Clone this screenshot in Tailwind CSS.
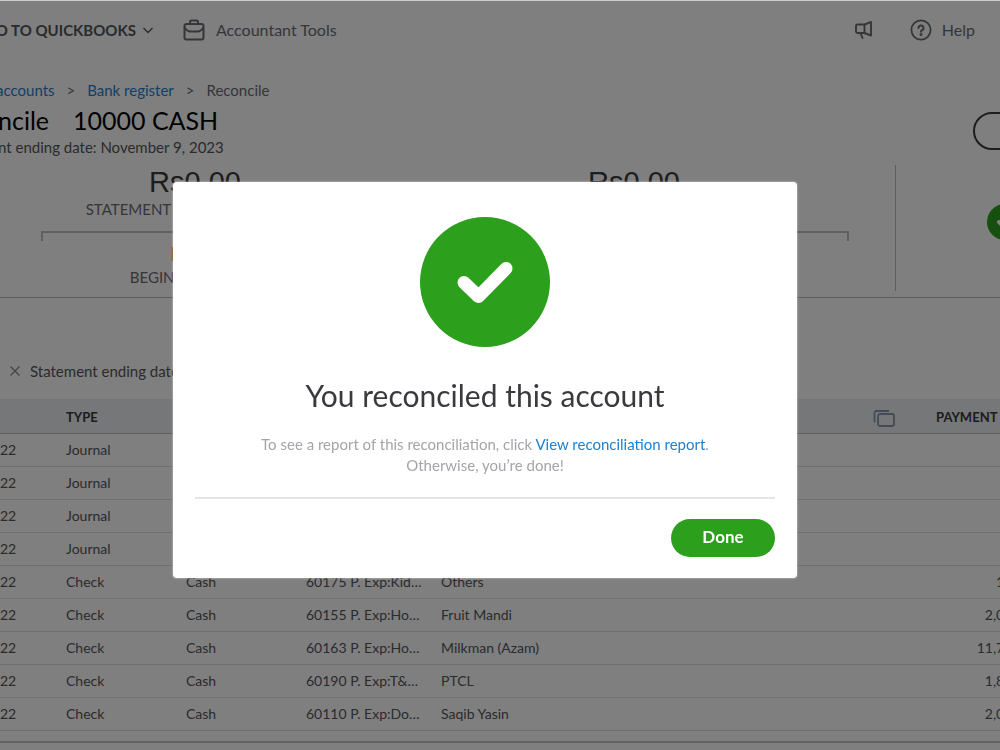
<!DOCTYPE html>
<html lang="en">
<head>
    <meta charset="UTF-8">
    <meta name="viewport" content="width=device-width, initial-scale=1.0">
    <title>Reconcile</title>
    <script src="https://cdn.jsdelivr.net/npm/@tailwindcss/browser@4"></script>
</head>
<body class="h-screen overflow-hidden bg-white font-['Lato',sans-serif] text-[#54565a]">

    <!-- Top bar -->
    <header class="flex h-[60px] items-center overflow-hidden whitespace-nowrap border-t border-[#ccc]">
        <button type="button" class="-ml-1 flex w-[158px] shrink-0 items-center justify-end gap-1.5 text-[15px] font-bold">
            O TO QUICKBOOKS
            <svg class="h-3 w-3 shrink-0" viewBox="0 0 12 12" fill="none" stroke="currentColor" stroke-width="1.3"><path d="M1.500 3 6 7.500 10.500 3"/></svg>
        </button>
        <button type="button" class="ml-7 flex items-center gap-2.5 pb-0.5 text-base text-[#6b6c72]">
            <svg class="h-6 w-6" viewBox="0 0 24 24" fill="none" stroke="currentColor" stroke-width="2" stroke-linejoin="round"><rect x="2.500" y="6" width="19" height="15.500" rx="2"/><path d="M8 6V4a1.500 1.500 0 0 1 1.500-1.500h5A1.500 1.500 0 0 1 16 4v2M2.500 9.500C4 12 6 13.500 8.500 13.500h7c2.500 0 4.500-1.500 6-4"/></svg>
            Accountant Tools
        </button>
        <div class="ml-auto flex items-center gap-9 pb-0.5 pr-[25px] text-base text-[#6b6c72]">
            <button type="button" aria-label="Feedback">
                <svg class="h-5 w-5" viewBox="0 0 20 20" fill="none" stroke="currentColor" stroke-width="1.9" stroke-linejoin="round" stroke-linecap="round"><path d="M10.500 4.500H3.500A1.500 1.500 0 0 0 2 6v5.500A1.500 1.500 0 0 0 3.500 13h7zM10.500 4.500 17 2v13.500L10.500 13M6.500 13 8.500 18"/></svg>
            </button>
            <button type="button" class="flex items-center gap-2.5">
                <svg class="h-[22px] w-[22px]" viewBox="0 0 22 22" fill="none" stroke="currentColor" stroke-width="1.8" stroke-linecap="round"><circle cx="11" cy="11" r="9.600"/><path d="M8.500 9a2.500 2.500 0 1 1 3.600 2.200c-.8.400-1.100.800-1.100 1.500" stroke-width="2"/><circle cx="11" cy="15.500" r=".6"/></svg>
                Help
            </button>
        </div>
    </header>

    <main>
        <!-- Breadcrumbs and title -->
        <div class="flex items-start justify-between">
            <div class="pt-5">
                <nav class="flex h-[21px] items-center gap-3 text-[15px] text-[#6b6c72]">
                    <a href="#" class="-ml-1 text-[#1f80cf]">accounts</a>
                    <span>&gt;</span>
                    <a href="#" class="text-[#1f80cf]">Bank register</a>
                    <span>&gt;</span>
                    <span>Reconcile</span>
                </nav>
                <h1 class="-ml-0.5 flex h-10 items-center gap-6 whitespace-nowrap text-[25px] text-black">
                    <span>ncile</span>
                    <span>10000 CASH</span>
                </h1>
                <p class="-ml-0.5 h-3 whitespace-nowrap text-[15px] leading-3">nt ending date: November 9, 2023</p>
            </div>
            <button type="button" aria-label="Edit info" class="-mr-24 mt-[52px] h-[38px] w-[123px] rounded-full border-2 border-[#393a3d]"></button>
        </div>

        <!-- Balance summary -->
        <section class="flex border-b border-[#bababa] pb-1.5 pt-3">
            <div class="h-[126px] w-[896px] shrink-0 border-r border-[#bababa]">
                <div class="grid grid-cols-[390px_488px] text-center">
                    <div>
                        <p class="font-['Liberation_Sans',sans-serif] text-[29px] leading-[34px] text-[#393a3d]">Rs0.00</p>
                        <p class="text-[15px] leading-5 text-[#6b6c72]">STATEMENT ENDING BALANCE</p>
                    </div>
                    <div>
                        <p class="font-['Liberation_Sans',sans-serif] text-[29px] leading-[34px] text-[#393a3d]">Rs0.00</p>
                        <p class="text-[15px] leading-5 text-[#6b6c72]">CLEARED BALANCE</p>
                    </div>
                </div>
                <div class="ml-[41px] mr-[46px] mt-3 h-2.5 border-x-2 border-t-2 border-[#babec5]"></div>
                <div class="w-[414px] text-center">
                    <p class="pr-2.5 font-['Liberation_Sans',sans-serif] text-xl leading-[26px] text-[#ff8000]">Rs0.00</p>
                    <p class="text-[15px] leading-5 text-[#6b6c72]">BEGINNING BALANCE</p>
                </div>
            </div>
            <div class="ml-[91px] flex items-center overflow-hidden">
                <svg class="-mt-3 h-9 w-9 shrink-0" viewBox="0 0 36 36"><circle cx="18" cy="18" r="18" fill="#2ca01c"/><path d="m12 18 4.500 4.500 8.500-8.500" fill="none" stroke="#fff" stroke-width="4" stroke-linecap="round" stroke-linejoin="round"/></svg>
            </div>
        </section>

        <!-- Active filter -->
        <div class="flex items-center gap-2.5 whitespace-nowrap pb-4 pl-2.5 pt-[61px] text-[15px] leading-6">
            <button type="button" aria-label="Clear filter">
                <svg class="h-2.5 w-2.5" viewBox="0 0 10 10" stroke="#8d9096" stroke-width="1.4"><path d="m.500.500 9 9m0-9-9 9"/></svg>
            </button>
            Statement ending date
        </div>

        <!-- Transactions -->
        <div class="overflow-hidden border-b-2 border-[#c4c6ca] pb-2.5">
            <table class="w-[105%] table-fixed whitespace-nowrap text-sm">
                <colgroup>
                    <col class="w-14">
                    <col class="w-[120px]">
                    <col class="w-[120px]">
                    <col class="w-[135px]">
                    <col>
                    <col class="w-[63px]">
                    <col class="w-[124px]">
                </colgroup>
                <thead class="bg-[#eceef1] text-[13px] text-[#393a3d]">
                    <tr class="h-[34px] border-b border-[#babec5] text-left">
                        <th></th>
                        <th class="px-2.5 pt-1">TYPE</th>
                        <th></th>
                        <th></th>
                        <th></th>
                        <th class="px-2.5 pt-1">
                            <svg class="h-[22px] w-[22px]" viewBox="0 0 22 22" fill="none" stroke="#8799ad" stroke-width="1.800"><rect x="5" y="7" width="16" height="12" rx="2"/><path d="M1.500 15.500V6a2 2 0 0 1 2-2H16"/></svg>
                        </th>
                        <th class="px-2.5 pt-1">PAYMENT</th>
                    </tr>
                </thead>
                <tbody>
                    <tr class="h-[33px] border-b border-[#dcdee1]"><td>22</td><td class="px-2.5">Journal</td><td></td><td></td><td></td><td></td><td></td></tr>
                    <tr class="h-[33px] border-b border-[#dcdee1]"><td>22</td><td class="px-2.5">Journal</td><td></td><td></td><td></td><td></td><td></td></tr>
                    <tr class="h-[33px] border-b border-[#dcdee1]"><td>22</td><td class="px-2.5">Journal</td><td></td><td></td><td></td><td></td><td></td></tr>
                    <tr class="h-[33px] border-b border-[#dcdee1]"><td>22</td><td class="px-2.5">Journal</td><td></td><td></td><td></td><td></td><td></td></tr>
                    <tr class="h-[33px] border-b border-[#dcdee1]"><td>22</td><td class="px-2.5">Check</td><td class="px-2.5">Cash</td><td class="px-2.5">60175 P. Exp:Kid…</td><td class="px-2.5">Others</td><td></td><td class="px-2.5 text-right">100.00</td></tr>
                    <tr class="h-[33px] border-b border-[#dcdee1]"><td>22</td><td class="px-2.5">Check</td><td class="px-2.5">Cash</td><td class="px-2.5">60155 P. Exp:Ho…</td><td class="px-2.5">Fruit Mandi</td><td></td><td class="px-2.5 text-right">2,000.00</td></tr>
                    <tr class="h-[33px] border-b border-[#dcdee1]"><td>22</td><td class="px-2.5">Check</td><td class="px-2.5">Cash</td><td class="px-2.5">60163 P. Exp:Ho…</td><td class="px-2.5">Milkman (Azam)</td><td></td><td class="px-2.5 text-right">11,700.00</td></tr>
                    <tr class="h-[33px] border-b border-[#dcdee1]"><td>22</td><td class="px-2.5">Check</td><td class="px-2.5">Cash</td><td class="px-2.5">60190 P. Exp:T&amp;…</td><td class="px-2.5">PTCL</td><td></td><td class="px-2.5 text-right">1,800.00</td></tr>
                    <tr class="h-[33px] border-b border-[#dcdee1]"><td>22</td><td class="px-2.5">Check</td><td class="px-2.5">Cash</td><td class="px-2.5">60110 P. Exp:Do…</td><td class="px-2.5">Saqib Yasin</td><td></td><td class="px-2.5 text-right">2,000.00</td></tr>
                </tbody>
            </table>
        </div>
    </main>

    <!-- Confirmation dialog -->
    <div class="fixed inset-x-0 bottom-0 top-px flex items-start justify-center bg-black/50 pr-[30px] pt-[181px]">
        <div role="dialog" aria-labelledby="dialogTitle" class="w-full max-w-[624px] rounded bg-white px-[22px] pb-[21px] pt-[35px] text-center shadow-[0_0_2px_#ddd]">
            <svg class="mx-auto h-[130px] w-[130px]" viewBox="0 0 130 130"><circle cx="65" cy="65" r="65" fill="#2ca01c"/><path d="M44 65.500 58.500 79.500 86 51.500" fill="none" stroke="#fff" stroke-width="13" stroke-linecap="round" stroke-linejoin="round"/></svg>
            <h2 id="dialogTitle" class="mt-7 text-[30px] leading-10 text-[#393a3d]">You reconciled this account</h2>
            <p class="mt-[19px] pb-[21px] text-[15px] leading-[21px] text-[#a3a5a9]">
                To see a report of this reconciliation, click <a href="#" class="text-[#1f80cf]">View reconciliation report</a>.<br>
                Otherwise, you’re done!
            </p>
            <div class="flex justify-end border-t-2 border-[#e3e5e8] pt-5">
                <button type="button" class="h-[38px] w-[104px] rounded-full bg-[#2ca01c] pb-0.5 text-[17px] font-bold text-white">Done</button>
            </div>
        </div>
    </div>

</body>
</html>
